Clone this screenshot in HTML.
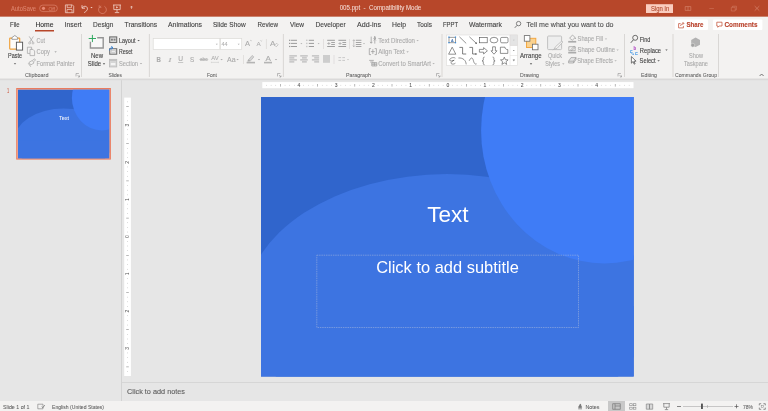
<!DOCTYPE html>
<html><head><meta charset="utf-8"><title>PowerPoint</title>
<style>
html,body{margin:0;padding:0;background:#E6E6E6;overflow:hidden}
body{width:768px;height:411px;position:relative;font-family:"Liberation Sans",sans-serif}
svg{position:absolute;left:0;top:0;display:block;will-change:transform}
svg text{font-family:"Liberation Sans",sans-serif;white-space:pre}
</style></head><body>
<svg width="768" height="411" viewBox="0 0 768 411">
<rect x="0" y="0" width="768" height="411" fill="#E6E6E6" />
<rect x="0" y="0" width="768" height="16.8" fill="#B7472A" />
<rect x="0" y="16.8" width="768" height="61.7" fill="#F3F2F1" />
<rect x="0" y="78.5" width="768" height="0.8" fill="#E1DFDD" />
<rect x="0" y="79.3" width="768" height="0.9" fill="#D6D5D4" />
<rect x="0" y="401" width="768" height="10" fill="#F3F2F1" />
<rect x="121" y="80.2" width="1" height="320.8" fill="#D3D3D3" />
<rect x="122" y="382" width="646" height="0.9" fill="#D4D4D4" />
<defs><clipPath id="sc"><rect x="261" y="97" width="372.7" height="279.5"/></clipPath><clipPath id="tc"><rect x="18" y="89.7" width="91.2" height="68.5"/></clipPath></defs>
<rect x="261" y="97" width="372.7" height="279.5" fill="#3065CC" />
<g clip-path="url(#sc)"><ellipse cx="447" cy="306.3" rx="202.1" ry="132.2" fill="#3D74E1"/><rect x="261" y="306" width="373" height="71" fill="#3D74E1"/><ellipse cx="604.4" cy="130.5" rx="123.3" ry="132.9" fill="#3F7CF6"/></g>
<text x="427.3" y="221.80" font-size="22.5" fill="#fff" font-weight="400" textLength="41.30" lengthAdjust="spacingAndGlyphs" stroke="#fff" stroke-width="0" >Text</text>
<rect x="316.8" y="255.2" width="261.7" height="72.3" fill="none" stroke="#B4C0DE" stroke-width="0.6" stroke-dasharray="1.5 0.8" stroke-opacity="0.8"/>
<text x="376.2" y="273.24" font-size="16.5" fill="#fff" font-weight="400" textLength="142.60" lengthAdjust="spacingAndGlyphs" stroke="#fff" stroke-width="0" >Click to add subtitle</text>
<rect x="16.2" y="88" width="94.7" height="71.6" fill="#EB7C5E" />
<rect x="17.3" y="89.1" width="92.5" height="69.5" fill="#F2AE9B" />
<rect x="18" y="89.7" width="91.2" height="68.5" fill="#3065CC" />
<g clip-path="url(#tc)"><ellipse cx="63.5" cy="140.9" rx="49.5" ry="32.4" fill="#3D74E1"/><rect x="18" y="140.9" width="91.2" height="30" fill="#3D74E1"/><ellipse cx="102.1" cy="97.9" rx="30.2" ry="32.5" fill="#3F7CF6"/></g>
<text x="58.9" y="120.14" font-size="5.4" fill="#EEF2FC" font-weight="400" textLength="10.10" lengthAdjust="spacingAndGlyphs" stroke="#EEF2FC" stroke-width="0.06" >Text</text>
<text x="7" y="93.40" font-size="6.4" fill="#CC5A42" font-weight="400" textLength="2.20" lengthAdjust="spacingAndGlyphs" stroke="#CC5A42" stroke-width="0.06" >1</text>
<rect x="262.3" y="82.1" width="371.2" height="6.1" fill="#fff" />
<rect x="124.2" y="97.6" width="6.7" height="278.4" fill="#fff" />
<rect x="266.15" y="84.9" width="0.6" height="0.8" fill="#b5b5b5" />
<rect x="270.8" y="84.9" width="0.6" height="0.8" fill="#b5b5b5" />
<rect x="275.45" y="84.9" width="0.6" height="0.8" fill="#b5b5b5" />
<rect x="280.09999999999997" y="84" width="0.6" height="2.6" fill="#8a8a8a" />
<rect x="284.75" y="84.9" width="0.6" height="0.8" fill="#b5b5b5" />
<rect x="289.4" y="84.9" width="0.6" height="0.8" fill="#b5b5b5" />
<rect x="294.05" y="84.9" width="0.6" height="0.8" fill="#b5b5b5" />
<text x="297.6" y="86.93" font-size="4.8" fill="#555" font-weight="400" textLength="2.80" lengthAdjust="spacingAndGlyphs" stroke="#555" stroke-width="0.06" >4</text>
<rect x="303.34999999999997" y="84.9" width="0.6" height="0.8" fill="#b5b5b5" />
<rect x="308.0" y="84.9" width="0.6" height="0.8" fill="#b5b5b5" />
<rect x="312.65" y="84.9" width="0.6" height="0.8" fill="#b5b5b5" />
<rect x="317.3" y="84" width="0.6" height="2.6" fill="#8a8a8a" />
<rect x="321.95" y="84.9" width="0.6" height="0.8" fill="#b5b5b5" />
<rect x="326.59999999999997" y="84.9" width="0.6" height="0.8" fill="#b5b5b5" />
<rect x="331.25" y="84.9" width="0.6" height="0.8" fill="#b5b5b5" />
<text x="334.8" y="86.93" font-size="4.8" fill="#555" font-weight="400" textLength="2.80" lengthAdjust="spacingAndGlyphs" stroke="#555" stroke-width="0.06" >3</text>
<rect x="340.55" y="84.9" width="0.6" height="0.8" fill="#b5b5b5" />
<rect x="345.2" y="84.9" width="0.6" height="0.8" fill="#b5b5b5" />
<rect x="349.84999999999997" y="84.9" width="0.6" height="0.8" fill="#b5b5b5" />
<rect x="354.5" y="84" width="0.6" height="2.6" fill="#8a8a8a" />
<rect x="359.15" y="84.9" width="0.6" height="0.8" fill="#b5b5b5" />
<rect x="363.8" y="84.9" width="0.6" height="0.8" fill="#b5b5b5" />
<rect x="368.45" y="84.9" width="0.6" height="0.8" fill="#b5b5b5" />
<text x="372.0" y="86.93" font-size="4.8" fill="#555" font-weight="400" textLength="2.80" lengthAdjust="spacingAndGlyphs" stroke="#555" stroke-width="0.06" >2</text>
<rect x="377.75" y="84.9" width="0.6" height="0.8" fill="#b5b5b5" />
<rect x="382.4" y="84.9" width="0.6" height="0.8" fill="#b5b5b5" />
<rect x="387.05" y="84.9" width="0.6" height="0.8" fill="#b5b5b5" />
<rect x="391.7" y="84" width="0.6" height="2.6" fill="#8a8a8a" />
<rect x="396.34999999999997" y="84.9" width="0.6" height="0.8" fill="#b5b5b5" />
<rect x="401.0" y="84.9" width="0.6" height="0.8" fill="#b5b5b5" />
<rect x="405.65" y="84.9" width="0.6" height="0.8" fill="#b5b5b5" />
<text x="409.20000000000005" y="86.93" font-size="4.8" fill="#555" font-weight="400" textLength="2.80" lengthAdjust="spacingAndGlyphs" stroke="#555" stroke-width="0.06" >1</text>
<rect x="414.95" y="84.9" width="0.6" height="0.8" fill="#b5b5b5" />
<rect x="419.6" y="84.9" width="0.6" height="0.8" fill="#b5b5b5" />
<rect x="424.25" y="84.9" width="0.6" height="0.8" fill="#b5b5b5" />
<rect x="428.9" y="84" width="0.6" height="2.6" fill="#8a8a8a" />
<rect x="433.55" y="84.9" width="0.6" height="0.8" fill="#b5b5b5" />
<rect x="438.2" y="84.9" width="0.6" height="0.8" fill="#b5b5b5" />
<rect x="442.85" y="84.9" width="0.6" height="0.8" fill="#b5b5b5" />
<text x="446.40000000000003" y="86.93" font-size="4.8" fill="#555" font-weight="400" textLength="2.80" lengthAdjust="spacingAndGlyphs" stroke="#555" stroke-width="0.06" >0</text>
<rect x="452.15" y="84.9" width="0.6" height="0.8" fill="#b5b5b5" />
<rect x="456.8" y="84.9" width="0.6" height="0.8" fill="#b5b5b5" />
<rect x="461.45" y="84.9" width="0.6" height="0.8" fill="#b5b5b5" />
<rect x="466.1" y="84" width="0.6" height="2.6" fill="#8a8a8a" />
<rect x="470.75" y="84.9" width="0.6" height="0.8" fill="#b5b5b5" />
<rect x="475.4" y="84.9" width="0.6" height="0.8" fill="#b5b5b5" />
<rect x="480.05" y="84.9" width="0.6" height="0.8" fill="#b5b5b5" />
<text x="483.6" y="86.93" font-size="4.8" fill="#555" font-weight="400" textLength="2.80" lengthAdjust="spacingAndGlyphs" stroke="#555" stroke-width="0.06" >1</text>
<rect x="489.35" y="84.9" width="0.6" height="0.8" fill="#b5b5b5" />
<rect x="494.0" y="84.9" width="0.6" height="0.8" fill="#b5b5b5" />
<rect x="498.65000000000003" y="84.9" width="0.6" height="0.8" fill="#b5b5b5" />
<rect x="503.3" y="84" width="0.6" height="2.6" fill="#8a8a8a" />
<rect x="507.95" y="84.9" width="0.6" height="0.8" fill="#b5b5b5" />
<rect x="512.6" y="84.9" width="0.6" height="0.8" fill="#b5b5b5" />
<rect x="517.25" y="84.9" width="0.6" height="0.8" fill="#b5b5b5" />
<text x="520.8000000000001" y="86.93" font-size="4.8" fill="#555" font-weight="400" textLength="2.80" lengthAdjust="spacingAndGlyphs" stroke="#555" stroke-width="0.06" >2</text>
<rect x="526.5500000000001" y="84.9" width="0.6" height="0.8" fill="#b5b5b5" />
<rect x="531.2" y="84.9" width="0.6" height="0.8" fill="#b5b5b5" />
<rect x="535.85" y="84.9" width="0.6" height="0.8" fill="#b5b5b5" />
<rect x="540.5" y="84" width="0.6" height="2.6" fill="#8a8a8a" />
<rect x="545.1500000000001" y="84.9" width="0.6" height="0.8" fill="#b5b5b5" />
<rect x="549.8000000000001" y="84.9" width="0.6" height="0.8" fill="#b5b5b5" />
<rect x="554.45" y="84.9" width="0.6" height="0.8" fill="#b5b5b5" />
<text x="558.0" y="86.93" font-size="4.8" fill="#555" font-weight="400" textLength="2.80" lengthAdjust="spacingAndGlyphs" stroke="#555" stroke-width="0.06" >3</text>
<rect x="563.7500000000001" y="84.9" width="0.6" height="0.8" fill="#b5b5b5" />
<rect x="568.4000000000001" y="84.9" width="0.6" height="0.8" fill="#b5b5b5" />
<rect x="573.0500000000001" y="84.9" width="0.6" height="0.8" fill="#b5b5b5" />
<rect x="577.7" y="84" width="0.6" height="2.6" fill="#8a8a8a" />
<rect x="582.3500000000001" y="84.9" width="0.6" height="0.8" fill="#b5b5b5" />
<rect x="587.0" y="84.9" width="0.6" height="0.8" fill="#b5b5b5" />
<rect x="591.6500000000001" y="84.9" width="0.6" height="0.8" fill="#b5b5b5" />
<text x="595.2" y="86.93" font-size="4.8" fill="#555" font-weight="400" textLength="2.80" lengthAdjust="spacingAndGlyphs" stroke="#555" stroke-width="0.06" >4</text>
<rect x="600.95" y="84.9" width="0.6" height="0.8" fill="#b5b5b5" />
<rect x="605.6000000000001" y="84.9" width="0.6" height="0.8" fill="#b5b5b5" />
<rect x="610.25" y="84.9" width="0.6" height="0.8" fill="#b5b5b5" />
<rect x="614.9000000000001" y="84" width="0.6" height="2.6" fill="#8a8a8a" />
<rect x="619.5500000000001" y="84.9" width="0.6" height="0.8" fill="#b5b5b5" />
<rect x="624.2" y="84.9" width="0.6" height="0.8" fill="#b5b5b5" />
<rect x="628.8500000000001" y="84.9" width="0.6" height="0.8" fill="#b5b5b5" />
<rect x="127.1" y="101.54999999999997" width="0.8" height="0.6" fill="#b5b5b5" />
<rect x="126.2" y="106.19999999999997" width="2.6" height="0.6" fill="#8a8a8a" />
<rect x="127.1" y="110.84999999999998" width="0.8" height="0.6" fill="#b5b5b5" />
<rect x="127.1" y="115.49999999999999" width="0.8" height="0.6" fill="#b5b5b5" />
<rect x="127.1" y="120.14999999999998" width="0.8" height="0.6" fill="#b5b5b5" />
<text transform="translate(129.25,126.50) rotate(-90)" font-size="4.8" fill="#555" textLength="2.8" lengthAdjust="spacingAndGlyphs">3</text>
<rect x="127.1" y="129.45" width="0.8" height="0.6" fill="#b5b5b5" />
<rect x="127.1" y="134.09999999999997" width="0.8" height="0.6" fill="#b5b5b5" />
<rect x="127.1" y="138.74999999999997" width="0.8" height="0.6" fill="#b5b5b5" />
<rect x="126.2" y="143.39999999999998" width="2.6" height="0.6" fill="#8a8a8a" />
<rect x="127.1" y="148.04999999999995" width="0.8" height="0.6" fill="#b5b5b5" />
<rect x="127.1" y="152.7" width="0.8" height="0.6" fill="#b5b5b5" />
<rect x="127.1" y="157.34999999999997" width="0.8" height="0.6" fill="#b5b5b5" />
<text transform="translate(129.25,163.70) rotate(-90)" font-size="4.8" fill="#555" textLength="2.8" lengthAdjust="spacingAndGlyphs">2</text>
<rect x="127.1" y="166.64999999999998" width="0.8" height="0.6" fill="#b5b5b5" />
<rect x="127.1" y="171.29999999999995" width="0.8" height="0.6" fill="#b5b5b5" />
<rect x="127.1" y="175.95" width="0.8" height="0.6" fill="#b5b5b5" />
<rect x="126.2" y="180.59999999999997" width="2.6" height="0.6" fill="#8a8a8a" />
<rect x="127.1" y="185.24999999999997" width="0.8" height="0.6" fill="#b5b5b5" />
<rect x="127.1" y="189.89999999999998" width="0.8" height="0.6" fill="#b5b5b5" />
<rect x="127.1" y="194.54999999999998" width="0.8" height="0.6" fill="#b5b5b5" />
<text transform="translate(129.25,200.90) rotate(-90)" font-size="4.8" fill="#555" textLength="2.8" lengthAdjust="spacingAndGlyphs">1</text>
<rect x="127.1" y="203.84999999999997" width="0.8" height="0.6" fill="#b5b5b5" />
<rect x="127.1" y="208.49999999999997" width="0.8" height="0.6" fill="#b5b5b5" />
<rect x="127.1" y="213.14999999999998" width="0.8" height="0.6" fill="#b5b5b5" />
<rect x="126.2" y="217.79999999999998" width="2.6" height="0.6" fill="#8a8a8a" />
<rect x="127.1" y="222.45" width="0.8" height="0.6" fill="#b5b5b5" />
<rect x="127.1" y="227.09999999999997" width="0.8" height="0.6" fill="#b5b5b5" />
<rect x="127.1" y="231.74999999999997" width="0.8" height="0.6" fill="#b5b5b5" />
<text transform="translate(129.25,238.10) rotate(-90)" font-size="4.8" fill="#555" textLength="2.8" lengthAdjust="spacingAndGlyphs">0</text>
<rect x="127.1" y="241.04999999999998" width="0.8" height="0.6" fill="#b5b5b5" />
<rect x="127.1" y="245.7" width="0.8" height="0.6" fill="#b5b5b5" />
<rect x="127.1" y="250.34999999999997" width="0.8" height="0.6" fill="#b5b5b5" />
<rect x="126.2" y="254.99999999999997" width="2.6" height="0.6" fill="#8a8a8a" />
<rect x="127.1" y="259.65" width="0.8" height="0.6" fill="#b5b5b5" />
<rect x="127.1" y="264.29999999999995" width="0.8" height="0.6" fill="#b5b5b5" />
<rect x="127.1" y="268.95" width="0.8" height="0.6" fill="#b5b5b5" />
<text transform="translate(129.25,275.30) rotate(-90)" font-size="4.8" fill="#555" textLength="2.8" lengthAdjust="spacingAndGlyphs">1</text>
<rect x="127.1" y="278.25" width="0.8" height="0.6" fill="#b5b5b5" />
<rect x="127.1" y="282.9" width="0.8" height="0.6" fill="#b5b5b5" />
<rect x="127.1" y="287.55" width="0.8" height="0.6" fill="#b5b5b5" />
<rect x="126.2" y="292.2" width="2.6" height="0.6" fill="#8a8a8a" />
<rect x="127.1" y="296.84999999999997" width="0.8" height="0.6" fill="#b5b5b5" />
<rect x="127.1" y="301.5" width="0.8" height="0.6" fill="#b5b5b5" />
<rect x="127.1" y="306.15" width="0.8" height="0.6" fill="#b5b5b5" />
<text transform="translate(129.25,312.50) rotate(-90)" font-size="4.8" fill="#555" textLength="2.8" lengthAdjust="spacingAndGlyphs">2</text>
<rect x="127.1" y="315.45" width="0.8" height="0.6" fill="#b5b5b5" />
<rect x="127.1" y="320.09999999999997" width="0.8" height="0.6" fill="#b5b5b5" />
<rect x="127.1" y="324.75" width="0.8" height="0.6" fill="#b5b5b5" />
<rect x="126.2" y="329.4" width="2.6" height="0.6" fill="#8a8a8a" />
<rect x="127.1" y="334.05" width="0.8" height="0.6" fill="#b5b5b5" />
<rect x="127.1" y="338.7" width="0.8" height="0.6" fill="#b5b5b5" />
<rect x="127.1" y="343.34999999999997" width="0.8" height="0.6" fill="#b5b5b5" />
<text transform="translate(129.25,349.70) rotate(-90)" font-size="4.8" fill="#555" textLength="2.8" lengthAdjust="spacingAndGlyphs">3</text>
<rect x="127.1" y="352.65" width="0.8" height="0.6" fill="#b5b5b5" />
<rect x="127.1" y="357.3" width="0.8" height="0.6" fill="#b5b5b5" />
<rect x="127.1" y="361.95" width="0.8" height="0.6" fill="#b5b5b5" />
<rect x="126.2" y="366.59999999999997" width="2.6" height="0.6" fill="#8a8a8a" />
<rect x="127.1" y="371.25" width="0.8" height="0.6" fill="#b5b5b5" />
<text x="127" y="393.86" font-size="7.4" fill="#5f5f5f" font-weight="400" textLength="58.00" lengthAdjust="spacingAndGlyphs" stroke="#5f5f5f" stroke-width="0.11" >Click to add notes</text>
<text x="3" y="408.94" font-size="5.4" fill="#606060" font-weight="400" textLength="26.50" lengthAdjust="spacingAndGlyphs" stroke="#606060" stroke-width="0.06" >Slide 1 of 1</text>
<text x="52" y="408.94" font-size="5.4" fill="#606060" font-weight="400" textLength="52.00" lengthAdjust="spacingAndGlyphs" stroke="#606060" stroke-width="0.06" >English (United States)</text>
<path d="M37.8 404.2h5.2v4.6h-5.2z" fill="none" stroke="#777" stroke-width="0.6" />
<path d="M41.8 406.6l1 1.1l2-2.6" fill="none" stroke="#666" stroke-width="0.7" />
<path d="M578.2 408.8h3.8 M578.6 407.4h3 l-0.6-1.6h-1.8z M579.6 405.6l0.5-1.4h0.4l0.5 1.4" fill="#888" stroke="#666" stroke-width="0.7" />
<text x="585.5" y="408.94" font-size="5.4" fill="#606060" font-weight="400" textLength="14.00" lengthAdjust="spacingAndGlyphs" stroke="#606060" stroke-width="0.06" >Notes</text>
<rect x="608" y="401" width="17" height="10" fill="#C8C8C8" />
<path d="M612.7 403.7h7.6v5.6h-7.6z M615 403.7v5.6 M615 406h5.3" fill="none" stroke="#777" stroke-width="0.7" />
<rect x="629.7" y="403.7" width="2.5" height="2" fill="none" stroke="#888" stroke-width="0.6" />
<rect x="633.4" y="403.7" width="2.5" height="2" fill="none" stroke="#888" stroke-width="0.6" />
<rect x="629.7" y="407.2" width="2.5" height="2" fill="none" stroke="#888" stroke-width="0.6" />
<rect x="633.4" y="407.2" width="2.5" height="2" fill="none" stroke="#888" stroke-width="0.6" />
<path d="M646.3 404v5.2h3.2v-5.2z M649.5 404v5.2h3.2v-5.2z" fill="#d8d8d8" stroke="#888" stroke-width="0.7" />
<path d="M663 403.6h7 M663.8 403.6v3.6h5.4v-3.6 M666.5 407.2v2.2 M664.8 409.6h3.4" fill="none" stroke="#777" stroke-width="0.7" />
<rect x="677" y="406" width="4" height="0.7" fill="#555" />
<rect x="683" y="406.1" width="50" height="0.5" fill="#9a9a9a" />
<rect x="701" y="403.6" width="1.9" height="5.4" fill="#555" />
<rect x="707.3" y="405" width="0.5" height="3" fill="#9a9a9a" />
<rect x="734.5" y="406" width="4" height="0.7" fill="#555" />
<rect x="736.15" y="404.3" width="0.7" height="4" fill="#555" />
<text x="743" y="408.94" font-size="5.4" fill="#606060" font-weight="400" textLength="10.00" lengthAdjust="spacingAndGlyphs" stroke="#606060" stroke-width="0.06" >78%</text>
<path d="M759.3 405.4v-1.7h1.9 M763.4 403.7h1.9v1.7 M765.3 407.6v1.7h-1.9 M761.2 409.3h-1.9v-1.7" fill="none" stroke="#666" stroke-width="0.7" />
<rect x="761.2" y="405.4" width="2.2" height="2.2" fill="none" stroke="#888" stroke-width="0.5" />
<text x="11" y="10.78" font-size="6.6" fill="#DD836C" font-weight="400" textLength="25.00" lengthAdjust="spacingAndGlyphs" stroke="#DD836C" stroke-width="0.11" >AutoSave</text>
<rect x="39.6" y="5.1" width="17.8" height="6.5" fill="none" stroke="#DD836C" stroke-width="0.7" rx="3.25" />
<circle cx="43.5" cy="8.35" r="1.55" fill="#E88A74" />
<text x="48.5" y="10.77" font-size="5.2" fill="#DD836C" font-weight="400" textLength="6.50" lengthAdjust="spacingAndGlyphs" stroke="#DD836C" stroke-width="0.06" >Off</text>
<path d="M65.4 4.9h7l1.3 1.3v6.5h-8.3z" fill="none" stroke="#F3D3C9" stroke-width="0.75" />
<path d="M67.2 4.9v2.8h4.2v-2.8 M67 12.7v-3.2h5v3.2" fill="none" stroke="#F3D3C9" stroke-width="0.7" />
<path d="M82 5.2v3h3 M82.2 8c1.2-2.2 4.6-2.4 5.2 0.2c0.4 1.8-1.2 3.2-3.2 4.4" fill="none" stroke="#F3D3C9" stroke-width="0.9" />
<path d="M90.40 7.00h2.2l-1.10 1.2z" fill="#F3D3C9"/>
<path d="M101.2 6a3.9 3.9 0 1 0 3.2 0.3 M99.2 5.2v2.2h2.2" fill="none" stroke="#D9806A" stroke-width="0.8" />
<path d="M113 5h8 M113.8 5v4.6h6.4v-4.6 M117 9.6v2.6 M114.8 12.6h4.4" fill="none" stroke="#F3D3C9" stroke-width="0.8" />
<path d="M116.2 6.2l2 1.1l-2 1.1z" fill="#F3D3C9" stroke="none" stroke-width="1" />
<rect x="130.7" y="6.4" width="1.6" height="0.7" fill="#fff" />
<path d="M130.5 7.5h2l-1 1.3z" fill="#fff" stroke="none" stroke-width="1" />
<text x="339.7" y="10.30" font-size="6.4" fill="#F4DAD2" font-weight="400" textLength="81.60" lengthAdjust="spacingAndGlyphs" stroke="#F4DAD2" stroke-width="0.06" >005.ppt  -  Compatibility Mode</text>
<rect x="646" y="4.2" width="27" height="8.8" fill="#FACDBF" />
<text x="651" y="10.90" font-size="6.4" fill="#AC4226" font-weight="400" textLength="18.20" lengthAdjust="spacingAndGlyphs" stroke="#AC4226" stroke-width="0.06" >Sign in</text>
<path d="M685.2 6.6h5.6v3.8h-5.6z M688 6.6v3.8" fill="none" stroke="#D98B74" stroke-width="0.6" />
<rect x="709.3" y="8" width="4.6" height="0.55" fill="#D27860" />
<path d="M731.3 7.3h3.9v3.7h-3.9z M732.5 7.3v-1.1h3.9v3.7h-1.2" fill="none" stroke="#D57E66" stroke-width="0.55" />
<path d="M754.7 6.1l4.6 4.6 M759.3 6.1l-4.6 4.6" fill="none" stroke="#DB8E78" stroke-width="0.6" />
<text x="10" y="27.08" font-size="6.9" fill="#444" font-weight="400" textLength="9.60" lengthAdjust="spacingAndGlyphs" stroke="#444" stroke-width="0.11" >File</text>
<text x="35.5" y="27.08" font-size="6.9" fill="#333" font-weight="400" textLength="18.00" lengthAdjust="spacingAndGlyphs" stroke="#333" stroke-width="0.11" >Home</text>
<text x="64.6" y="27.08" font-size="6.9" fill="#444" font-weight="400" textLength="17.00" lengthAdjust="spacingAndGlyphs" stroke="#444" stroke-width="0.11" >Insert</text>
<text x="93" y="27.08" font-size="6.9" fill="#444" font-weight="400" textLength="20.40" lengthAdjust="spacingAndGlyphs" stroke="#444" stroke-width="0.11" >Design</text>
<text x="124.6" y="27.08" font-size="6.9" fill="#444" font-weight="400" textLength="32.40" lengthAdjust="spacingAndGlyphs" stroke="#444" stroke-width="0.11" >Transitions</text>
<text x="168" y="27.08" font-size="6.9" fill="#444" font-weight="400" textLength="34.00" lengthAdjust="spacingAndGlyphs" stroke="#444" stroke-width="0.11" >Animations</text>
<text x="213" y="27.08" font-size="6.9" fill="#444" font-weight="400" textLength="32.60" lengthAdjust="spacingAndGlyphs" stroke="#444" stroke-width="0.11" >Slide Show</text>
<text x="257.5" y="27.08" font-size="6.9" fill="#444" font-weight="400" textLength="20.50" lengthAdjust="spacingAndGlyphs" stroke="#444" stroke-width="0.11" >Review</text>
<text x="290" y="27.08" font-size="6.9" fill="#444" font-weight="400" textLength="14.00" lengthAdjust="spacingAndGlyphs" stroke="#444" stroke-width="0.11" >View</text>
<text x="315.5" y="27.08" font-size="6.9" fill="#444" font-weight="400" textLength="30.10" lengthAdjust="spacingAndGlyphs" stroke="#444" stroke-width="0.11" >Developer</text>
<text x="357" y="27.08" font-size="6.9" fill="#444" font-weight="400" textLength="24.00" lengthAdjust="spacingAndGlyphs" stroke="#444" stroke-width="0.11" >Add-ins</text>
<text x="392" y="27.08" font-size="6.9" fill="#444" font-weight="400" textLength="14.00" lengthAdjust="spacingAndGlyphs" stroke="#444" stroke-width="0.11" >Help</text>
<text x="417" y="27.08" font-size="6.9" fill="#444" font-weight="400" textLength="15.00" lengthAdjust="spacingAndGlyphs" stroke="#444" stroke-width="0.11" >Tools</text>
<text x="443" y="27.08" font-size="6.9" fill="#444" font-weight="400" textLength="15.00" lengthAdjust="spacingAndGlyphs" stroke="#444" stroke-width="0.11" >FPPT</text>
<text x="469" y="27.08" font-size="6.9" fill="#444" font-weight="400" textLength="33.00" lengthAdjust="spacingAndGlyphs" stroke="#444" stroke-width="0.11" >Watermark</text>
<rect x="35" y="30" width="19" height="1.5" fill="#B7472A" />
<circle cx="518.6" cy="23.6" r="2.2" fill="none" stroke="#555" stroke-width="0.7" />
<line x1="517" y1="25.4" x2="514.8" y2="27.8" stroke="#555" stroke-width="0.8" />
<text x="526.5" y="27.08" font-size="6.9" fill="#505050" font-weight="400" textLength="87.00" lengthAdjust="spacingAndGlyphs" stroke="#505050" stroke-width="0.11" >Tell me what you want to do</text>
<rect x="674.8" y="19.5" width="33.2" height="10.5" fill="#fff" rx="1" />
<rect x="712.9" y="19.5" width="49.5" height="10.5" fill="#fff" rx="1" />
<path d="M680.6 23.6h-2v4.3h4.8v-2 M680.6 26c0.2-1.6 1.3-2.6 3.1-2.6 M682.5 22l1.4 1.4l-1.4 1.4" fill="none" stroke="#C0482C" stroke-width="0.7" />
<text x="686.5" y="27.15" font-size="6.8" fill="#B8402A" font-weight="700" textLength="17.00" lengthAdjust="spacingAndGlyphs" stroke="#B8402A" stroke-width="0.11" >Share</text>
<path d="M716.8 22.2h5.2v3.8h-3l-1.2 1.3v-1.3h-1z" fill="none" stroke="#C0482C" stroke-width="0.7" />
<text x="724.5" y="27.15" font-size="6.8" fill="#B8402A" font-weight="700" textLength="33.00" lengthAdjust="spacingAndGlyphs" stroke="#B8402A" stroke-width="0.11" >Comments</text>
<rect x="81.1" y="34" width="0.8" height="43" fill="#D2D0CE" />
<rect x="148.9" y="34" width="0.8" height="43" fill="#D2D0CE" />
<rect x="282.90000000000003" y="34" width="0.8" height="43" fill="#D2D0CE" />
<rect x="441.6" y="34" width="0.8" height="43" fill="#D2D0CE" />
<rect x="624.1" y="34" width="0.8" height="43" fill="#D2D0CE" />
<rect x="672.6" y="34" width="0.8" height="43" fill="#D2D0CE" />
<rect x="718.1" y="34" width="0.8" height="43" fill="#D2D0CE" />
<rect x="243.25" y="55" width="0.7" height="9" fill="#DAD8D6" />
<rect x="265.95" y="39" width="0.7" height="10" fill="#DAD8D6" />
<rect x="323.15" y="39" width="0.7" height="10" fill="#DAD8D6" />
<rect x="349.15" y="39" width="0.7" height="10" fill="#DAD8D6" />
<rect x="333.65" y="55" width="0.7" height="9" fill="#DAD8D6" />
<text x="25" y="77.32" font-size="5.9" fill="#5f5f5f" font-weight="400" textLength="23.50" lengthAdjust="spacingAndGlyphs" stroke="#5f5f5f" stroke-width="0.06" >Clipboard</text>
<text x="108.5" y="77.32" font-size="5.9" fill="#5f5f5f" font-weight="400" textLength="13.50" lengthAdjust="spacingAndGlyphs" stroke="#5f5f5f" stroke-width="0.06" >Slides</text>
<text x="207" y="77.32" font-size="5.9" fill="#5f5f5f" font-weight="400" textLength="10.00" lengthAdjust="spacingAndGlyphs" stroke="#5f5f5f" stroke-width="0.06" >Font</text>
<text x="346" y="77.32" font-size="5.9" fill="#5f5f5f" font-weight="400" textLength="25.00" lengthAdjust="spacingAndGlyphs" stroke="#5f5f5f" stroke-width="0.06" >Paragraph</text>
<text x="520" y="77.32" font-size="5.9" fill="#5f5f5f" font-weight="400" textLength="19.00" lengthAdjust="spacingAndGlyphs" stroke="#5f5f5f" stroke-width="0.06" >Drawing</text>
<text x="641" y="77.32" font-size="5.9" fill="#5f5f5f" font-weight="400" textLength="16.00" lengthAdjust="spacingAndGlyphs" stroke="#5f5f5f" stroke-width="0.06" >Editing</text>
<text x="675" y="77.32" font-size="5.9" fill="#5f5f5f" font-weight="400" textLength="42.00" lengthAdjust="spacingAndGlyphs" stroke="#5f5f5f" stroke-width="0.06" >Commands Group</text>
<path d="M76 76.4v-2.9h2.9 M77.4 74.9l2 2 M79.5 75.4v1.6h-1.6" fill="none" stroke="#8a8a8a" stroke-width="0.55" />
<path d="M277.5 76.4v-2.9h2.9 M278.9 74.9l2 2 M281.0 75.4v1.6h-1.6" fill="none" stroke="#8a8a8a" stroke-width="0.55" />
<path d="M436.5 76.4v-2.9h2.9 M437.9 74.9l2 2 M440.0 75.4v1.6h-1.6" fill="none" stroke="#8a8a8a" stroke-width="0.55" />
<path d="M618 76.4v-2.9h2.9 M619.4 74.9l2 2 M621.5 75.4v1.6h-1.6" fill="none" stroke="#8a8a8a" stroke-width="0.55" />
<path d="M759.6 76l2-2l2 2" fill="none" stroke="#555" stroke-width="0.8" />
<rect x="9.7" y="38.1" width="10" height="11" fill="#FFFDF9" stroke="#F0A23C" stroke-width="1.2" rx="0.5" />
<path d="M11.9 39.3v-1.7l2.9-2.1l2.9 2.1v1.7z" fill="#fff" stroke="#7a7a7a" stroke-width="0.7" />
<rect x="16.4" y="42.2" width="6.2" height="7.9" fill="#fff" stroke="#5a5a5a" stroke-width="0.95" />
<text x="8" y="58.41" font-size="6.7" fill="#444" font-weight="400" textLength="14.00" lengthAdjust="spacingAndGlyphs" stroke="#444" stroke-width="0.11" >Paste</text>
<path d="M13.80 63.15h2.4l-1.20 1.3z" fill="#555"/>
<path d="M29.2 36.4l3.6 5.6 M33.4 36.4l-3.6 5.6" fill="none" stroke="#A2A2A2" stroke-width="0.7" />
<circle cx="29.6" cy="43" r="1" fill="none" stroke="#A2A2A2" stroke-width="0.6" />
<circle cx="33" cy="43" r="1" fill="none" stroke="#A2A2A2" stroke-width="0.6" />
<text x="36.6" y="42.91" font-size="6.7" fill="#ABABAB" font-weight="400" textLength="8.40" lengthAdjust="spacingAndGlyphs" stroke="#ABABAB" stroke-width="0.11" >Cut</text>
<path d="M27.4 47.2h4.2v6.2h-4.2z" fill="none" stroke="#A2A2A2" stroke-width="0.7" />
<path d="M30 49.4h3l1.6 1.6v4.6h-4.6z" fill="#F3F2F1" stroke="#A2A2A2" stroke-width="0.7" />
<text x="36.6" y="54.41" font-size="6.7" fill="#ABABAB" font-weight="400" textLength="13.40" lengthAdjust="spacingAndGlyphs" stroke="#ABABAB" stroke-width="0.11" >Copy</text>
<path d="M54.40 51.35h2.4l-1.20 1.3z" fill="#ABABAB"/>
<path d="M29 62.4l3.4-2l1.6 2.6l-3.4 2z M32.8 60.2l1.8-1.4l0.9 1.4l-1.7 1.2 M28.2 63.2l2.6 3.6" fill="none" stroke="#A2A2A2" stroke-width="0.7" />
<text x="36.6" y="65.91" font-size="6.7" fill="#ABABAB" font-weight="400" textLength="38.00" lengthAdjust="spacingAndGlyphs" stroke="#ABABAB" stroke-width="0.11" >Format Painter</text>
<rect x="90" y="37.8" width="13.4" height="10.4" fill="#F8F8F8" />
<path d="M97.2 37.8h6v10.2h-12.8v-6.2" fill="none" stroke="#949494" stroke-width="1.4" />
<path d="M92.4 34.9v7.2 M88.7 38.5h7.3" fill="none" stroke="#27A55A" stroke-width="0.95" />
<text x="91" y="58.41" font-size="6.7" fill="#444" font-weight="400" textLength="12.00" lengthAdjust="spacingAndGlyphs" stroke="#444" stroke-width="0.11" >New</text>
<text x="87.8" y="66.21" font-size="6.7" fill="#444" font-weight="400" textLength="13.40" lengthAdjust="spacingAndGlyphs" stroke="#444" stroke-width="0.11" >Slide</text>
<path d="M102.80 63.35h2.4l-1.20 1.3z" fill="#555"/>
<rect x="109.7" y="36.9" width="7" height="5.6" fill="#DADADA" stroke="#707070" stroke-width="1.1" />
<rect x="111" y="38.7" width="1.9" height="1.9" fill="#808080" />
<rect x="113.6" y="38.7" width="1.9" height="1.9" fill="#808080" />
<text x="119" y="42.91" font-size="6.7" fill="#444" font-weight="400" textLength="16.50" lengthAdjust="spacingAndGlyphs" stroke="#444" stroke-width="0.11" >Layout</text>
<path d="M137.40 39.95h2.4l-1.20 1.3z" fill="#555"/>
<rect x="109.7" y="48.7" width="7" height="5.5" fill="#ECECEC" stroke="#747474" stroke-width="1.1" />
<rect x="111.2" y="50.6" width="4.2" height="2" fill="none" stroke="#BDBDBD" stroke-width="0.6" />
<path d="M109.5 50.4c0-2 1.4-3 3.2-2.6 M111.3 46.3l1.7 1.4l-1.6 1.5" fill="none" stroke="#2E7BD1" stroke-width="0.95" />
<text x="119" y="54.21" font-size="6.7" fill="#444" font-weight="400" textLength="13.50" lengthAdjust="spacingAndGlyphs" stroke="#444" stroke-width="0.11" >Reset</text>
<rect x="109.5" y="59.4" width="7.2" height="7.5" fill="#D6D6D6" stroke="#BDBDBD" stroke-width="0.9" />
<rect x="109.5" y="59.4" width="7.2" height="1.6" fill="#C2C2C2" />
<rect x="110.8" y="63" width="4.6" height="2.2" fill="#F4F4F4" />
<text x="119" y="65.91" font-size="6.7" fill="#ABABAB" font-weight="400" textLength="19.00" lengthAdjust="spacingAndGlyphs" stroke="#ABABAB" stroke-width="0.11" >Section</text>
<path d="M139.80 62.95h2.4l-1.20 1.3z" fill="#ABABAB"/>
<rect x="153.2" y="38.6" width="66.6" height="11" fill="#fff" stroke="#DCDAD8" stroke-width="0.7" />
<rect x="220.5" y="38.6" width="21.2" height="11" fill="#fff" stroke="#DCDAD8" stroke-width="0.7" />
<path d="M215.80 43.85h2l-1.00 1.1z" fill="#B0B0B0"/>
<path d="M237.70 43.85h2l-1.00 1.1z" fill="#B0B0B0"/>
<text x="221.6" y="46.43" font-size="6.2" fill="#ABABAB" font-weight="400" textLength="6.00" lengthAdjust="spacingAndGlyphs" stroke="#ABABAB" stroke-width="0.06" >44</text>
<text x="156.6" y="61.75" font-size="6.8" fill="#ABABAB" font-weight="700" textLength="4.40" lengthAdjust="spacingAndGlyphs" stroke="#ABABAB" stroke-width="0.11" >B</text>
<text x="168.4" y="61.75" font-size="6.8" fill="#ABABAB" font-weight="400" textLength="2.80" lengthAdjust="spacingAndGlyphs" stroke="#ABABAB" stroke-width="0.11" style="font-style:italic;font-family:'Liberation Serif',serif">I</text>
<text x="178.2" y="61.28" font-size="6.6" fill="#ABABAB" font-weight="400" textLength="4.80" lengthAdjust="spacingAndGlyphs" stroke="#ABABAB" stroke-width="0.11" >U</text>
<rect x="178" y="62.4" width="5.2" height="0.6" fill="#ABABAB" />
<text x="190" y="61.75" font-size="6.8" fill="#ABABAB" font-weight="400" textLength="4.20" lengthAdjust="spacingAndGlyphs" stroke="#ABABAB" stroke-width="0.11" >S</text>
<text x="200" y="61.46" font-size="4.6" fill="#ABABAB" font-weight="400" textLength="7.60" lengthAdjust="spacingAndGlyphs" stroke="#ABABAB" stroke-width="0.06" >abc</text>
<rect x="199.4" y="59.4" width="8.8" height="0.6" fill="#ABABAB" />
<text x="211.2" y="60.07" font-size="5.2" fill="#ABABAB" font-weight="400" textLength="7.40" lengthAdjust="spacingAndGlyphs" stroke="#ABABAB" stroke-width="0.06" >AV</text>
<path d="M211.4 62.4h7 M211.4 61.7v1.4 M218.4 61.7v1.4" fill="none" stroke="#C4C4C4" stroke-width="0.5" />
<path d="M220.40 58.95h2.4l-1.20 1.3z" fill="#ABABAB"/>
<text x="227" y="61.78" font-size="6.9" fill="#ABABAB" font-weight="400" textLength="8.60" lengthAdjust="spacingAndGlyphs" stroke="#ABABAB" stroke-width="0.11" >Aa</text>
<path d="M236.40 58.95h2.4l-1.20 1.3z" fill="#ABABAB"/>
<text x="245" y="45.85" font-size="6.8" fill="#ABABAB" font-weight="400" textLength="5.00" lengthAdjust="spacingAndGlyphs" stroke="#ABABAB" stroke-width="0.11" >A</text>
<path d="M250 41l0.9-0.8l0.9 0.8" fill="none" stroke="#ABABAB" stroke-width="0.5" />
<text x="256.4" y="45.89" font-size="5.8" fill="#ABABAB" font-weight="400" textLength="4.20" lengthAdjust="spacingAndGlyphs" stroke="#ABABAB" stroke-width="0.06" >A</text>
<path d="M260.4 40.4l0.9 0.8l0.9-0.8" fill="none" stroke="#ABABAB" stroke-width="0.5" />
<text x="270" y="45.66" font-size="7.4" fill="#ABABAB" font-weight="400" textLength="5.40" lengthAdjust="spacingAndGlyphs" stroke="#ABABAB" stroke-width="0.11" >A</text>
<path d="M274.6 45.2l2-2l1.6 1.6l-2 2z" fill="#F3F2F1" stroke="#ABABAB" stroke-width="0.6" />
<path d="M248.6 59.6l3.6-4.2l1.7 1.5l-3.6 4.2z" fill="#D4D4D4" stroke="#ABABAB" stroke-width="0.6" />
<path d="M248.6 59.6l-0.9 1.6l2.4-0.1" fill="#ABABAB" stroke="#ABABAB" stroke-width="0.6" />
<rect x="246.6" y="61.8" width="8.4" height="1.6" fill="#B4B4B4" />
<path d="M257.80 58.95h2.4l-1.20 1.3z" fill="#ABABAB"/>
<text x="265.4" y="60.65" font-size="6.8" fill="#ABABAB" font-weight="400" textLength="5.40" lengthAdjust="spacingAndGlyphs" stroke="#ABABAB" stroke-width="0.11" >A</text>
<rect x="264" y="61.8" width="8" height="1.6" fill="#B4B4B4" />
<path d="M274.80 58.95h2.4l-1.20 1.3z" fill="#ABABAB"/>
<rect x="289.1" y="39.699999999999996" width="1.2" height="1.2" fill="#8E8E8E" />
<rect x="291" y="39.8" width="6" height="1" fill="#9C9C9C" />
<rect x="306.4" y="39.599999999999994" width="0.9" height="1.4" fill="#B0B0B0" />
<rect x="308.8" y="39.8" width="5.2" height="1" fill="#9C9C9C" />
<rect x="289.1" y="42.8" width="1.2" height="1.2" fill="#8E8E8E" />
<rect x="291" y="42.9" width="6" height="1" fill="#9C9C9C" />
<rect x="306.4" y="42.699999999999996" width="0.9" height="1.4" fill="#B0B0B0" />
<rect x="308.8" y="42.9" width="5.2" height="1" fill="#9C9C9C" />
<rect x="289.1" y="45.9" width="1.2" height="1.2" fill="#8E8E8E" />
<rect x="291" y="46" width="6" height="1" fill="#9C9C9C" />
<rect x="306.4" y="45.8" width="0.9" height="1.4" fill="#B0B0B0" />
<rect x="308.8" y="46" width="5.2" height="1" fill="#9C9C9C" />
<path d="M300.40 43.05h2l-1.00 1.1z" fill="#B4B4B4"/>
<path d="M317.60 43.05h2l-1.00 1.1z" fill="#B4B4B4"/>
<rect x="327.2" y="39.8" width="7.7" height="1" fill="#9C9C9C" />
<rect x="327.2" y="46" width="7.7" height="1" fill="#9C9C9C" />
<rect x="331.2" y="42" width="3.7" height="0.9" fill="#9C9C9C" />
<rect x="331.2" y="44" width="3.7" height="0.9" fill="#9C9C9C" />
<path d="M327.2 43.5h3.2 M328.8 42v3" fill="none" stroke="#A6A6A6" stroke-width="0.7" />
<rect x="338.4" y="39.8" width="7.7" height="1" fill="#9C9C9C" />
<rect x="338.4" y="46" width="7.7" height="1" fill="#9C9C9C" />
<rect x="342.4" y="42" width="3.7" height="0.9" fill="#9C9C9C" />
<rect x="342.4" y="44" width="3.7" height="0.9" fill="#9C9C9C" />
<path d="M338.4 43.5h3.2 M340.0 42v3" fill="none" stroke="#A6A6A6" stroke-width="0.7" />
<rect x="355.8" y="39.8" width="5.6" height="0.9" fill="#9C9C9C" />
<rect x="355.8" y="42" width="5.6" height="0.9" fill="#9C9C9C" />
<rect x="355.8" y="44" width="5.6" height="0.9" fill="#9C9C9C" />
<rect x="355.8" y="46" width="5.6" height="0.9" fill="#9C9C9C" />
<path d="M353.8 39.8v7 M352.8 41l1-1.3l1 1.3 M352.8 45.6l1 1.3l1-1.3" fill="none" stroke="#A6A6A6" stroke-width="0.6" />
<path d="M363.00 43.05h2l-1.00 1.1z" fill="#B4B4B4"/>
<rect x="289.3" y="55" width="7.6" height="1.7" fill="#C9C9C9" />
<rect x="300.2" y="55" width="7.6" height="1.7" fill="#C9C9C9" />
<rect x="311.9" y="55" width="7.2" height="1.7" fill="#C9C9C9" />
<rect x="289.3" y="57" width="5.0" height="1.7" fill="#C9C9C9" />
<rect x="302" y="57" width="4.8" height="1.7" fill="#C9C9C9" />
<rect x="314.2" y="57" width="4.9" height="1.7" fill="#C9C9C9" />
<rect x="289.3" y="59" width="7.6" height="1.7" fill="#C9C9C9" />
<rect x="300.2" y="59" width="7.6" height="1.7" fill="#C9C9C9" />
<rect x="311.9" y="59" width="7.2" height="1.7" fill="#C9C9C9" />
<rect x="289.3" y="61" width="5.0" height="1.7" fill="#C9C9C9" />
<rect x="302" y="61" width="4.8" height="1.7" fill="#C9C9C9" />
<rect x="314.2" y="61" width="4.9" height="1.7" fill="#C9C9C9" />
<rect x="323" y="55" width="7" height="7.8" fill="#CDCDCD" />
<rect x="338.4" y="57.1" width="2.7" height="1" fill="#C9C9C9" />
<rect x="342.3" y="57.1" width="2.7" height="1" fill="#C9C9C9" />
<rect x="338.4" y="59.9" width="2.7" height="1" fill="#C9C9C9" />
<rect x="342.3" y="59.9" width="2.7" height="1" fill="#C9C9C9" />
<path d="M347.00 59.25h2l-1.00 1.1z" fill="#B4B4B4"/>
<path d="M371.2 36.6v6.4 M370.1 41.9l1.1 1.4l1.1-1.4" fill="none" stroke="#959595" stroke-width="0.7" />
<path d="M374.8 43.6v-4.4 M373.7 40.4l1.1-1.3l1.1 1.3" fill="none" stroke="#959595" stroke-width="0.7" />
<text x="373.6" y="38.70" font-size="3.6" fill="#959595" font-weight="400" textLength="2.60" lengthAdjust="spacingAndGlyphs" stroke="#959595" stroke-width="0.06" >A</text>
<text x="378.3" y="42.91" font-size="6.7" fill="#ABABAB" font-weight="400" textLength="36.70" lengthAdjust="spacingAndGlyphs" stroke="#ABABAB" stroke-width="0.11" >Text Direction</text>
<path d="M416.40 39.95h2.4l-1.20 1.3z" fill="#B4B4B4"/>
<path d="M371 48.6h-1.7v6h1.7 M374.7 48.6h1.7v6h-1.7 M372.85 49.2v4.8 M370.9 51.6h3.9" fill="none" stroke="#959595" stroke-width="0.7" />
<text x="378.3" y="54.21" font-size="6.7" fill="#ABABAB" font-weight="400" textLength="26.30" lengthAdjust="spacingAndGlyphs" stroke="#ABABAB" stroke-width="0.11" >Align Text</text>
<path d="M406.40 51.35h2.4l-1.20 1.3z" fill="#B4B4B4"/>
<path d="M369.2 60.4h4.6 M370.2 62h3.2" fill="none" stroke="#959595" stroke-width="0.7" />
<path d="M371.8 66v-3.4h5v3.4z M371.8 64.2h5 M374.3 62.6v3.4" fill="#E2E2E2" stroke="#959595" stroke-width="0.65" />
<text x="378.3" y="65.91" font-size="6.7" fill="#ABABAB" font-weight="400" textLength="52.70" lengthAdjust="spacingAndGlyphs" stroke="#ABABAB" stroke-width="0.11" >Convert to SmartArt</text>
<path d="M432.40 62.95h2.4l-1.20 1.3z" fill="#B4B4B4"/>
<rect x="446.5" y="35" width="71" height="30.4" fill="#fff" stroke="#DDDBD9" stroke-width="0.6" />
<rect x="510" y="35" width="7.5" height="10.4" fill="#E4E4E4" stroke="#DDDBD9" stroke-width="0.5" />
<line x1="510" y1="45.4" x2="517.5" y2="45.4" stroke="#DDDBD9" stroke-width="0.5" />
<line x1="510" y1="55.5" x2="517.5" y2="55.5" stroke="#DDDBD9" stroke-width="0.5" />
<line x1="510" y1="35" x2="510" y2="65.4" stroke="#DDDBD9" stroke-width="0.5" />
<path d="M512.90 39.70h1.8l-0.90 1z" fill="#BEBEBE"/>
<path d="M512.90 50.10h1.8l-0.90 1z" fill="#666"/>
<rect x="512.8" y="59.2" width="2" height="0.5" fill="#777" />
<path d="M512.80 60.25h2l-1.00 1.1z" fill="#666"/>
<rect x="449" y="37.2" width="6.6" height="5.6" fill="none" stroke="#5a5a5a" stroke-width="0.6" />
<text x="451" y="41.54" font-size="4" fill="#3a6fb0" font-weight="400" textLength="2.60" lengthAdjust="spacingAndGlyphs" stroke="#3a6fb0" stroke-width="0.06" >A</text>
<rect x="448.29999999999995" y="36.5" width="1.2" height="1.2" fill="#2F8DE4" />
<rect x="454.9" y="36.5" width="1.2" height="1.2" fill="#2F8DE4" />
<rect x="448.29999999999995" y="42.1" width="1.2" height="1.2" fill="#2F8DE4" />
<rect x="454.9" y="42.1" width="1.2" height="1.2" fill="#2F8DE4" />
<line x1="459.4" y1="36.8" x2="466.2" y2="43.4" stroke="#4a4a4a" stroke-width="0.6" />
<line x1="469.4" y1="36.8" x2="476.4" y2="43.4" stroke="#4a4a4a" stroke-width="0.6" />
<path d="M476.9 43.9l-1.9-0.5l1.4-1.4z" fill="#4a4a4a" stroke="none" stroke-width="1" />
<rect x="479.4" y="37.4" width="7.8" height="5.4" fill="none" stroke="#4a4a4a" stroke-width="0.6" />
<ellipse cx="494" cy="40.1" rx="3.9" ry="2.8" fill="none" stroke="#4a4a4a" stroke-width="0.6" />
<rect x="500.6" y="37.4" width="7.4" height="5.4" fill="none" stroke="#4a4a4a" stroke-width="0.6" rx="1.2" />
<path d="M452.2 47.2l3.6 7h-7.2z" fill="none" stroke="#4a4a4a" stroke-width="0.6" />
<path d="M459.4 47.4h3.2v6.6h3.6" fill="none" stroke="#4a4a4a" stroke-width="0.7" />
<path d="M469.4 47.4h3.2v6.6h3.4" fill="none" stroke="#4a4a4a" stroke-width="0.7" />
<path d="M477.2 54l-1.7-1v2z" fill="#4a4a4a" stroke="none" stroke-width="1" />
<path d="M479.4 49.4h4.2v-1.8l3.8 3.2l-3.8 3.2v-1.8h-4.2z" fill="none" stroke="#4a4a4a" stroke-width="0.6" />
<path d="M492.6 46.8h2.8v4h1.6l-3 3.4l-3-3.4h1.6z" fill="none" stroke="#4a4a4a" stroke-width="0.6" />
<path d="M500.4 53.4v-6.2h4.6c0 1.6 1.2 2.4 2.8 2.4v3.8z" fill="none" stroke="#4a4a4a" stroke-width="0.6" />
<path d="M455.4 58.2c-2.4-1.6-5.8 0.4-5.8 1.8c0 1.6 3.4 0.8 4.6 0.2c-2.4 1-4.2 2.6-2.6 3.6c1.2 0.6 2.8 0.2 3.8-0.6" fill="none" stroke="#4a4a4a" stroke-width="0.6" />
<path d="M458.4 58c4.6-0.4 7.6 2.4 7.8 6.4" fill="none" stroke="#4a4a4a" stroke-width="0.6" />
<path d="M469.2 60.8c1.8-4 3.4-3.4 4.2-0.2c0.8 3.2 2 4 3.2 3.2" fill="none" stroke="#4a4a4a" stroke-width="0.6" />
<path d="M484.6 57.1c-1.3 0-1.3 0.6-1.3 1.6v1.2c0 0.7-0.4 1-1.2 1c0.8 0 1.2 0.3 1.2 1v1.2c0 1 0 1.6 1.3 1.6" fill="none" stroke="#4a4a4a" stroke-width="0.6" />
<path d="M492.6 57.1c1.3 0 1.3 0.6 1.3 1.6v1.2c0 0.7 0.4 1 1.2 1c-0.8 0-1.2 0.3-1.2 1v1.2c0 1 0 1.6-1.3 1.6" fill="none" stroke="#4a4a4a" stroke-width="0.6" />
<path d="M504.3 57.2l1.1 2.5l2.7 0.2l-2.1 1.8l0.7 2.7l-2.4-1.5l-2.4 1.5l0.7-2.7l-2.1-1.8l2.7-0.2z" fill="none" stroke="#4a4a4a" stroke-width="0.6" />
<rect x="526.5" y="38.3" width="9.3" height="9.2" fill="#FAD28F" stroke="#F2A53E" stroke-width="0.95" />
<rect x="524.3" y="35.6" width="5.6" height="5.6" fill="#fff" stroke="#6a6a6a" stroke-width="0.8" />
<rect x="532.4" y="44.2" width="5.6" height="5.6" fill="#fff" stroke="#6a6a6a" stroke-width="0.8" />
<text x="520" y="58.41" font-size="6.7" fill="#444" font-weight="400" textLength="21.50" lengthAdjust="spacingAndGlyphs" stroke="#444" stroke-width="0.11" >Arrange</text>
<path d="M529.80 63.35h2.4l-1.20 1.3z" fill="#555"/>
<rect x="547.6" y="36" width="14" height="13.6" fill="#EEEEEE" stroke="#C2C2C2" stroke-width="1.0" rx="1" />
<path d="M554 49.2l1.4-2.4l6.4-5.8l1 1l-5.8 6.4z M553 50.2l1-1" fill="#F3F2F1" stroke="#B0B0B0" stroke-width="0.7" />
<text x="548" y="58.41" font-size="6.7" fill="#ABABAB" font-weight="400" textLength="14.00" lengthAdjust="spacingAndGlyphs" stroke="#ABABAB" stroke-width="0.11" >Quick</text>
<text x="545.3" y="66.21" font-size="6.7" fill="#ABABAB" font-weight="400" textLength="14.50" lengthAdjust="spacingAndGlyphs" stroke="#ABABAB" stroke-width="0.11" >Styles</text>
<path d="M562.10 63.35h2.4l-1.20 1.3z" fill="#B4B4B4"/>
<path d="M569.6 38.2l2.9-3.2l2.7 2.6l-2.9 2.6z M575.2 37.6l0.5 1.4" fill="none" stroke="#959595" stroke-width="0.65" />
<rect x="568.2" y="40.9" width="8" height="1.7" fill="#ABABAB" />
<text x="577.6" y="41.41" font-size="6.7" fill="#ABABAB" font-weight="400" textLength="25.40" lengthAdjust="spacingAndGlyphs" stroke="#ABABAB" stroke-width="0.11" >Shape Fill</text>
<path d="M604.80 38.55h2.4l-1.20 1.3z" fill="#B4B4B4"/>
<path d="M568.8 46.7h6.4v4h-6.4z M570.6 49.8l3.6-3.4l1 1l-3.6 3.2z" fill="none" stroke="#959595" stroke-width="0.65" />
<rect x="568.2" y="51.8" width="8" height="1.7" fill="#ABABAB" />
<text x="577.6" y="52.31" font-size="6.7" fill="#ABABAB" font-weight="400" textLength="37.40" lengthAdjust="spacingAndGlyphs" stroke="#ABABAB" stroke-width="0.11" >Shape Outline</text>
<path d="M616.40 49.45h2.4l-1.20 1.3z" fill="#B4B4B4"/>
<path d="M568.6 61.2l2.4-3.6h5l-2.4 3.6z M568.6 61.2v1.8h5v-1.8 M573.6 63l2.4-3.6v-1.8" fill="#E4E4E4" stroke="#959595" stroke-width="0.65" />
<text x="577.2" y="63.01" font-size="6.7" fill="#ABABAB" font-weight="400" textLength="35.80" lengthAdjust="spacingAndGlyphs" stroke="#ABABAB" stroke-width="0.11" >Shape Effects</text>
<path d="M614.40 60.15h2.4l-1.20 1.3z" fill="#B4B4B4"/>
<circle cx="635.2" cy="37.8" r="2.5" fill="none" stroke="#444" stroke-width="0.75" />
<line x1="633.4" y1="39.8" x2="630.8" y2="42.8" stroke="#444" stroke-width="0.85" />
<text x="639.8" y="41.91" font-size="6.7" fill="#444" font-weight="400" textLength="10.60" lengthAdjust="spacingAndGlyphs" stroke="#444" stroke-width="0.11" >Find</text>
<text x="633.4" y="49.54" font-size="5.4" fill="#B146C2" font-weight="700" textLength="2.60" lengthAdjust="spacingAndGlyphs" stroke="#B146C2" stroke-width="0.06" >b</text>
<text x="635" y="54.74" font-size="5.4" fill="#2F8DE4" font-weight="400" textLength="2.80" lengthAdjust="spacingAndGlyphs" stroke="#2F8DE4" stroke-width="0.06" >c</text>
<text x="629.9" y="53.07" font-size="5.2" fill="#2F8DE4" font-weight="400" textLength="2.60" lengthAdjust="spacingAndGlyphs" stroke="#2F8DE4" stroke-width="0.06" >c</text>
<path d="M631.4 53.2c0.4 1 1.2 1.3 2.2 1 M632.9 55l0.9-0.9l-1.1-0.5" fill="none" stroke="#2F8DE4" stroke-width="0.55" />
<text x="639.8" y="52.61" font-size="6.7" fill="#444" font-weight="400" textLength="21.20" lengthAdjust="spacingAndGlyphs" stroke="#444" stroke-width="0.11" >Replace</text>
<path d="M665.30 49.45h2.4l-1.20 1.3z" fill="#555"/>
<path d="M631.4 56.6v6.6l1.6-1.6l1.2 2.6l0.9-0.4l-1.2-2.6h2.2z" fill="#fff" stroke="#333" stroke-width="0.65" />
<text x="639.6" y="63.01" font-size="6.7" fill="#444" font-weight="400" textLength="16.00" lengthAdjust="spacingAndGlyphs" stroke="#444" stroke-width="0.11" >Select</text>
<path d="M657.40 60.15h2.4l-1.20 1.3z" fill="#555"/>
<path d="M695.6 37.6l4.4 2.3v4.8l-4.4 2.3l-4.4-2.3v-4.8z" fill="#B2B2B2" stroke="none" stroke-width="1" />
<path d="M692.8 43.2l1.9 1v2l-1.9 1l-1.9-1v-2z" fill="#A2A2A2" stroke="#F3F2F1" stroke-width="0.4" />
<text x="689" y="58.21" font-size="6.7" fill="#ABABAB" font-weight="400" textLength="14.00" lengthAdjust="spacingAndGlyphs" stroke="#ABABAB" stroke-width="0.11" >Show</text>
<text x="684" y="66.21" font-size="6.7" fill="#ABABAB" font-weight="400" textLength="24.00" lengthAdjust="spacingAndGlyphs" stroke="#ABABAB" stroke-width="0.11" >Taskpane</text>
</svg>
</body></html>
